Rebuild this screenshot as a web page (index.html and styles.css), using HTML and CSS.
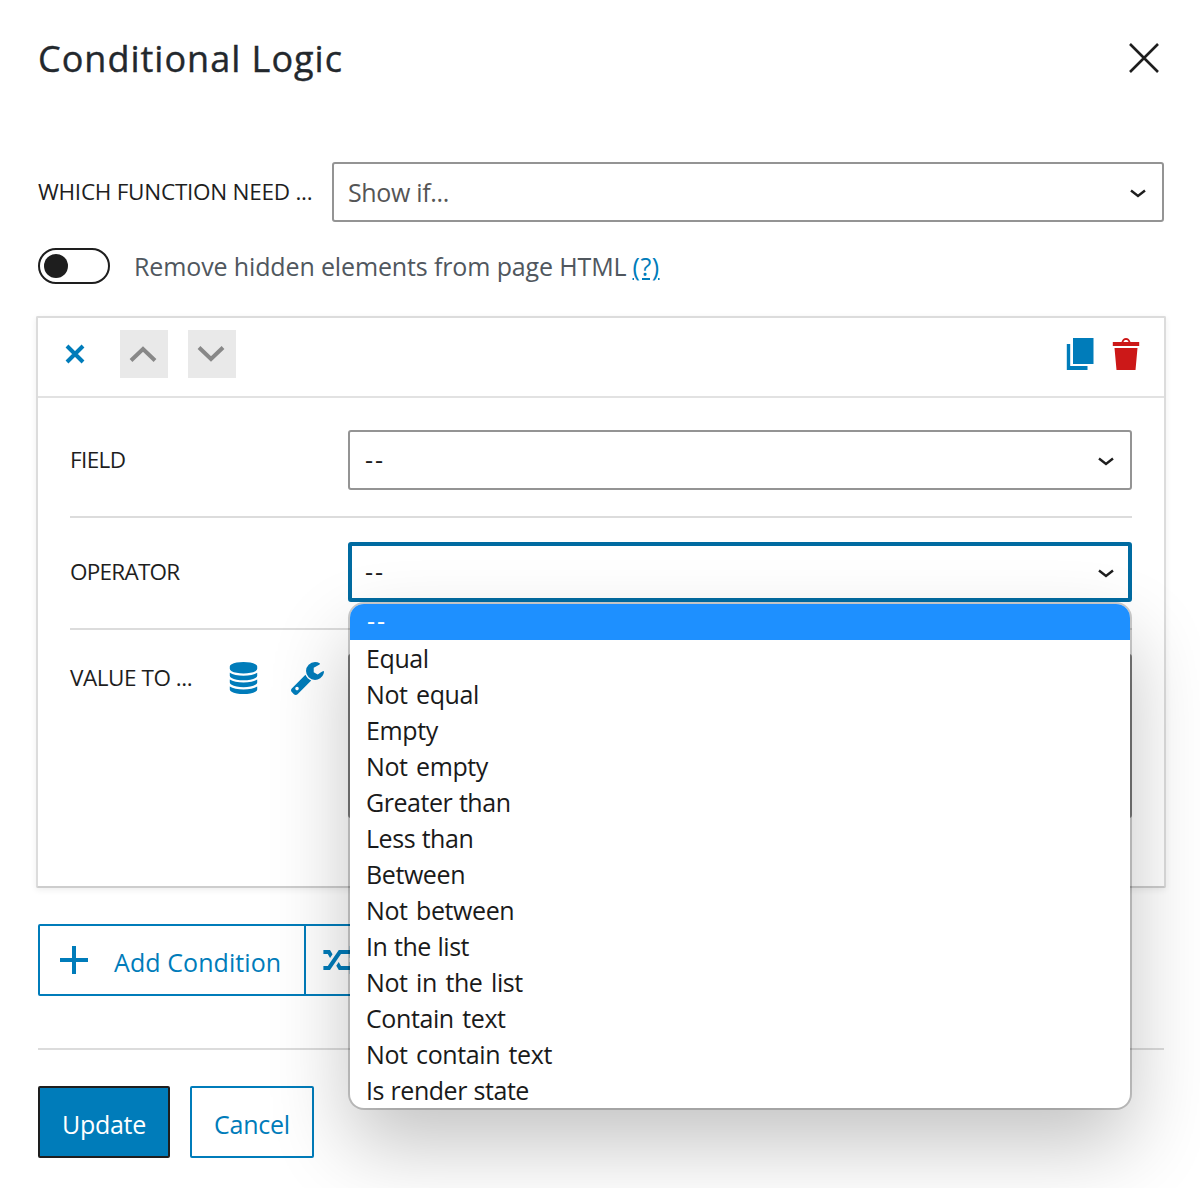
FILE: index.html
```html
<!DOCTYPE html>
<html lang="en">
<head>
<meta charset="utf-8">
<title>Conditional Logic</title>
<link rel="stylesheet" href="styles.css">
</head>
<body>
<main class="modal">
  <header class="modal-header">
    <h1 class="title">Conditional Logic</h1>
    <svg class="close" viewBox="0 0 32 32"><path d="M2 2l28 28M30 2L2 30"/></svg>
  </header>

  <div class="function-row">
    <span class="label label-function">WHICH FUNCTION NEED ...</span>
    <div class="select"><span class="show-if">Show if...</span><svg class="chevron" viewBox="0 0 18 10"><path d="M2 1.500l7 5.500 7-5.500"/></svg></div>
  </div>

  <div class="toggle-row">
    <span class="toggle"><span class="knob"></span></span>
    <span class="toggle-text">Remove hidden elements from page HTML</span>
    <a class="help">(?)</a>
  </div>

  <section class="panel">
    <div class="panel-bar">
      <svg class="collapse" viewBox="0 0 20 20"><path d="M2 2l16 16M18 2L2 18"/></svg>
      <span class="move"><svg viewBox="0 0 28 18"><path d="M2 15.500L14 4l12 11.500"/></svg></span>
      <span class="move"><svg viewBox="0 0 28 18"><path d="M2 2.500L14 14 26 2.500"/></svg></span>
      <span class="spacer"></span>
      <svg class="copy" viewBox="0 0 28 32"><path d="M7 0h20.500v26H7zM.8 6h3.400v22H21.500v4H.8z"/></svg>
      <svg class="trash" viewBox="0 0 28 32"><path d="M.8 4h8.700C10.500 1.300 11.700 0 14 0s3.500 1.300 4.500 4h8.700v4H.8zM11.500 4h5c-.4-1.400-1.200-2-2.500-2s-2.100.6-2.500 2zM2.500 10h23l-2 22h-19z"/></svg>
    </div>
    <div class="panel-body">
      <div class="field">
        <span class="label">FIELD</span>
        <div class="select"><span class="dashes">--</span><svg class="chevron" viewBox="0 0 18 10"><path d="M2 1.500l7 5.500 7-5.500"/></svg></div>
      </div>
      <div class="field field-operator">
        <span class="label label-operator">OPERATOR</span>
        <div class="select focused"><span class="dashes">--</span><svg class="chevron" viewBox="0 0 18 10"><path d="M2 1.500l7 5.500 7-5.500"/></svg></div>
        <ul class="options">
          <li class="active"><span class="dashes">--</span></li>
          <li>Equal</li>
          <li>Not equal</li>
          <li>Empty</li>
          <li>Not empty</li>
          <li class="tight">Greater than</li>
          <li class="tight">Less than</li>
          <li>Between</li>
          <li>Not between</li>
          <li class="tight">In the list</li>
          <li>Not in the list</li>
          <li>Contain text</li>
          <li>Not contain text</li>
          <li class="tight">Is render state</li>
        </ul>
      </div>
      <div class="field field-value">
        <div class="value-head">
          <span class="label label-value">VALUE TO ...</span>
          <svg class="database" viewBox="128 0 1536 1792"><path d="M896 768q237 0 443-43t325-127v170q0 69-103 128t-280 93.500-385 34.500-385-34.500-280-93.500-103-128v-170q119 84 325 127t443 43zm0 768q237 0 443-43t325-127v170q0 69-103 128t-280 93.500-385 34.500-385-34.500-280-93.500-103-128v-170q119 84 325 127t443 43zm0-384q237 0 443-43t325-127v170q0 69-103 128t-280 93.500-385 34.500-385-34.500-280-93.500-103-128v-170q119 84 325 127t443 43zm0-1152q208 0 385 34.500t280 93.500 103 128v128q0 69-103 128t-280 93.500-385 34.500-385-34.500-280-93.500-103-128v-128q0-69 103-128t280-93.500 385-34.500z"/></svg>
          <svg class="wrench" viewBox="85 128 1642 1644"><path fill-rule="evenodd" d="M470 1450q0-34-25-59t-61-25-61 25-25 59 25 60 61 26 61-26 25-60zm622-398l-682 682q-37 37-90 37-52 0-91-37l-106-108q-38-36-38-90 0-53 38-91l681-681q39 98 114.500 173.500t173.500 114.500zm634-435q0 39-23 106-47 134-164.500 217.500t-258.500 83.500q-185 0-316.500-131.500t-131.500-316.500 131.500-316.500 316.500-131.500q58 0 121.500 16.500t107.500 46.500q16 11 16 28t-16 28l-293 169v224l193 107q5-3 79-48.500t135.500-81 70.500-35.500q15 0 23.500 10t8.500 25z"/></svg>
        </div>
        <div class="textarea"></div>
      </div>
    </div>
  </section>

  <div class="add-group">
    <span class="add-button"><svg class="plus" viewBox="0 0 28 28"><path d="M0 14h28M14 0v28"/></svg><span class="add-text">Add Condition</span></span>
    <span class="random-button"><svg class="random" viewBox="0 0 20 20" preserveAspectRatio="none"><path d="M18 6.010L14 9V7h-4l-5 8H2v-2h2l5-8h5V3zM2 5h3l1.150 2.170-1.120 1.800L4 7H2zm16 9.010L14 17v-2H9l-1.150-2.170 1.120-1.800L10 13h4v-2z"/></svg></span>
  </div>

  <footer class="actions">
    <button class="button primary">Update</button>
    <button class="button">Cancel</button>
  </footer>
</main>
</body>
</html>
```
FILE: styles.css
```css
* {
  box-sizing: border-box;
}

body {
  margin: 0;
  background: #fff;
  color: #1e1e1e;
  font-family: "Open Sans", "Noto Sans", sans-serif;
  font-size: 25px;
  line-height: 36px;
}

svg {
  display: block;
  flex: none;
}

.modal {
  height: 1188px;
  padding: 0 36px 0 38px;
  overflow: hidden;
}

.modal-header {
  display: flex;
  justify-content: space-between;
  align-items: center;
  height: 116px;
  margin-bottom: 46px;
  padding-right: 4px;
}

.title {
  margin: 0;
  padding-top: 2px;
  font-size: 36px;
  font-weight: 500;
  line-height: 48px;
  letter-spacing: 1px;
  color: #23282d;
  -webkit-text-stroke: 0.4px #23282d;
}

.close {
  width: 32px;
  height: 32px;
  fill: none;
  stroke: #1e1e1e;
  stroke-width: 2.6;
}

.function-row {
  display: grid;
  grid-template-columns: 294px 1fr;
  align-items: center;
}

.label {
  font-size: 22.500px;
  letter-spacing: -0.6px;
  white-space: nowrap;
}

.label-function {
  letter-spacing: -0.25px;
}

.label-operator {
  letter-spacing: -0.75px;
}

.select {
  display: flex;
  align-items: center;
  justify-content: space-between;
  height: 60px;
  padding: 0 15px 0 14px;
  border: 2px solid #949494;
  border-radius: 3px;
  background: transparent;
}

.show-if {
  letter-spacing: -0.35px;
  color: #555;
}

.dashes {
  display: block;
  padding: 0 0 3px 1px;
  letter-spacing: 2px;
}

.focused {
  padding: 0 13px 0 12px;
  border: 4px solid #006ba1;
}

.chevron {
  width: 18px;
  height: 10px;
  margin-top: 4px;
  fill: none;
  stroke: #1e1e1e;
  stroke-width: 2.4;
}

.toggle-row {
  display: flex;
  align-items: center;
  height: 36px;
  margin-top: 26px;
  color: #50575e;
}

.toggle {
  display: flex;
  align-items: center;
  width: 72px;
  height: 36px;
  margin-right: 24px;
  padding-left: 4px;
  border: 2px solid #1e1e1e;
  border-radius: 18px;
}

.toggle-text {
  letter-spacing: -0.13px;
}

.knob {
  width: 24px;
  height: 24px;
  border-radius: 50%;
  background: #1e1e1e;
}

.help {
  margin-left: 6px;
  letter-spacing: 0.5px;
  color: #007cba;
  text-decoration: underline;
}

.panel {
  height: 572px;
  margin: 32px -2px 0;
  border: 2px solid #dcdcdc;
  border-bottom-color: #cdcdcd;
  border-radius: 2px;
  box-shadow: 0 2px 6px rgba(0, 0, 0, 0.07);
}

.panel-bar {
  display: flex;
  align-items: center;
  height: 80px;
  padding: 0 24px 6px 27px;
  border-bottom: 2px solid #e2e2e2;
}

.collapse {
  width: 20px;
  height: 20px;
  margin-right: 15px;
  fill: none;
  stroke: #007cba;
  stroke-width: 4;
}

.move {
  display: flex;
  align-items: center;
  justify-content: center;
  width: 48px;
  height: 48px;
  margin-left: 20px;
  padding-right: 2px;
  background: #e9e9e9;
}

.move svg {
  width: 28px;
  height: 18px;
  fill: none;
  stroke: #888;
  stroke-width: 4;
}

.spacer {
  flex: 1;
}

.copy {
  width: 28px;
  height: 32px;
  margin-right: 18px;
  fill: #007cba;
}

.trash {
  width: 28px;
  height: 32px;
  fill: #cc1818;
  fill-rule: evenodd;
}

.panel-body {
  padding: 0 32px;
}

.field {
  position: relative;
  display: grid;
  grid-template-columns: 278px 1fr;
  align-items: center;
  height: 120px;
  padding-top: 6px;
  border-bottom: 2px solid #dcdcdc;
}

.field-operator {
  height: 112px;
  padding: 0 0 2px;
}

.field-value {
  align-items: start;
  height: 190px;
  padding-top: 24px;
  border-bottom: 0;
}

.value-head {
  display: flex;
  align-items: center;
  height: 48px;
}

.label-value {
  width: 159px;
  letter-spacing: -0.45px;
}

.database {
  width: 29px;
  height: 32px;
  fill: #007cba;
}

.wrench {
  width: 33px;
  height: 33px;
  margin-left: 33px;
  fill: #007cba;
}

.textarea {
  height: 164px;
  border: 2px solid #949494;
  border-radius: 3px;
}

.options {
  position: absolute;
  z-index: 2;
  top: 86px;
  left: 280px;
  width: 780px;
  margin: 0;
  padding: 0;
  list-style: none;
  border-radius: 14px;
  background: #fff;
  color: #1a1a1a;
  letter-spacing: -0.4px;
  word-spacing: 2.400px;
  box-shadow: 0 0 0 2px rgba(0, 0, 0, 0.2), 0 36px 80px rgba(0, 0, 0, 0.24);
}

.options li {
  height: 36px;
  padding-left: 16px;
}

.options .tight {
  letter-spacing: -0.45px;
  word-spacing: 0.5px;
}

.options .active {
  border-radius: 14px 14px 0 0;
  background: #1e90ff;
  color: #fff;
  line-height: 33px;
}

.add-group {
  display: flex;
  width: 420px;
  height: 72px;
  margin-top: 36px;
  border: 2px solid #007cba;
  border-radius: 2px;
  color: #007cba;
}

.add-button {
  display: flex;
  align-items: center;
  width: 266px;
  padding-left: 20px;
  border-right: 2px solid #007cba;
}

.plus {
  width: 28px;
  height: 28px;
  margin-right: 26px;
  stroke: #007cba;
  stroke-width: 4;
}

.add-text {
  padding-top: 4px;
  letter-spacing: 0.08px;
}

.random {
  width: 44px;
  height: 40px;
  margin: 14px 0 0 13px;
  fill: #007cba;
}

.actions {
  display: flex;
  gap: 20px;
  margin-top: 52px;
  padding-top: 36px;
  border-top: 2px solid #dcdcdc;
}

.button {
  width: 124px;
  height: 72px;
  padding: 4px 0 0;
  border: 2px solid #007cba;
  border-radius: 2px;
  background: transparent;
  color: #007cba;
  font: inherit;
  letter-spacing: -0.25px;
}

.primary {
  width: 132px;
  border-color: #1e1e1e;
  background: #007cba;
  color: #fff;
}
```
